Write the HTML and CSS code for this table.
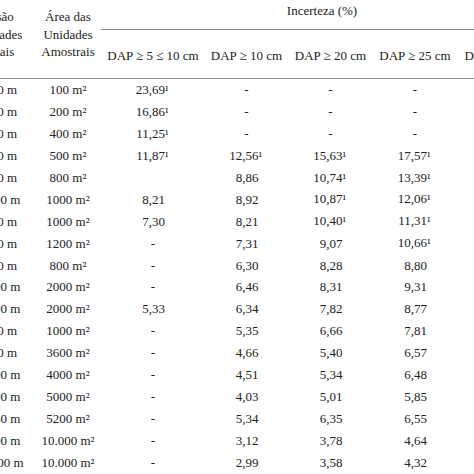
FILE: index.html
```html
<!DOCTYPE html>
<html lang="pt">
<head>
<meta charset="utf-8">
<title>Incerteza</title>
<link rel="stylesheet" href="styles.css">
</head>
<body>
<div class="frame">
<table class="tbl">
<colgroup>
<col class="c1"><col class="c2"><col class="c3"><col class="c4"><col class="c5"><col class="c6"><col class="c7">
</colgroup>
<thead>
<tr>
<th rowspan="2" class="side">Dimensão<br>das Unidades<br>Amostrais</th>
<th rowspan="2" class="side">Área das<br>Unidades<br>Amostrais</th>
<th colspan="5" class="group">Incerteza (%)</th>
</tr>
<tr class="dap">
<th>DAP ≥ 5 ≤ 10 cm</th>
<th>DAP ≥ 10 cm</th>
<th>DAP ≥ 20 cm</th>
<th>DAP ≥ 25 cm</th>
<th>DAP ≥ 30 cm</th>
</tr>
</thead>
<tbody>
<tr><td class="dim">10 x 10 m</td><td>100 m²</td><td class="n"><span class="v">23,69</span><span class="s">¹</span></td><td>-</td><td>-</td><td>-</td><td>-</td></tr>
<tr><td class="dim">10 x 20 m</td><td>200 m²</td><td class="n"><span class="v">16,86</span><span class="s">¹</span></td><td>-</td><td>-</td><td>-</td><td>-</td></tr>
<tr><td class="dim">20 x 20 m</td><td>400 m²</td><td class="n"><span class="v">11,25</span><span class="s">¹</span></td><td>-</td><td>-</td><td>-</td><td>-</td></tr>
<tr><td class="dim">10 x 50 m</td><td>500 m²</td><td class="n"><span class="v">11,87</span><span class="s">¹</span></td><td class="n"><span class="v">12,56</span><span class="s">¹</span></td><td class="n"><span class="v">15,63</span><span class="s">¹</span></td><td class="n"><span class="v">17,57</span><span class="s">¹</span></td><td class="n"><span class="v">19,02</span><span class="s">¹</span></td></tr>
<tr><td class="dim">20 x 40 m</td><td>800 m²</td><td></td><td class="n"><span class="v">8,86</span></td><td class="n"><span class="v">10,74</span><span class="s">¹</span></td><td class="n"><span class="v">13,39</span><span class="s">¹</span></td><td class="n"><span class="v">14,20</span><span class="s">¹</span></td></tr>
<tr><td class="dim">10 x 100 m</td><td>1000 m²</td><td class="n"><span class="v">8,21</span></td><td class="n"><span class="v">8,92</span></td><td class="n"><span class="v">10,87</span><span class="s">¹</span></td><td class="n"><span class="v">12,06</span><span class="s">¹</span></td><td class="n"><span class="v">13,10</span><span class="s">¹</span></td></tr>
<tr><td class="dim">20 x 50 m</td><td>1000 m²</td><td class="n"><span class="v">7,30</span></td><td class="n"><span class="v">8,21</span></td><td class="n"><span class="v">10,40</span><span class="s">¹</span></td><td class="n"><span class="v">11,31</span><span class="s">¹</span></td><td class="n"><span class="v">12,44</span><span class="s">¹</span></td></tr>
<tr><td class="dim">30 x 40 m</td><td>1200 m²</td><td>-</td><td class="n"><span class="v">7,31</span></td><td class="n"><span class="v">9,07</span></td><td class="n"><span class="v">10,66</span><span class="s">¹</span></td><td class="n"><span class="v">11,02</span></td></tr>
<tr><td class="dim">20 x 40 m</td><td>800 m²</td><td>-</td><td class="n"><span class="v">6,30</span></td><td class="n"><span class="v">8,28</span></td><td class="n"><span class="v">8,80</span></td><td class="n"><span class="v">9,95</span></td></tr>
<tr><td class="dim">20 x 100 m</td><td>2000 m²</td><td>-</td><td class="n"><span class="v">6,46</span></td><td class="n"><span class="v">8,31</span></td><td class="n"><span class="v">9,31</span></td><td class="n"><span class="v">10,12</span></td></tr>
<tr><td class="dim">10 x 200 m</td><td>2000 m²</td><td class="n"><span class="v">5,33</span></td><td class="n"><span class="v">6,34</span></td><td class="n"><span class="v">7,82</span></td><td class="n"><span class="v">8,77</span></td><td class="n"><span class="v">9,60</span></td></tr>
<tr><td class="dim">25 x 40 m</td><td>1000 m²</td><td>-</td><td class="n"><span class="v">5,35</span></td><td class="n"><span class="v">6,66</span></td><td class="n"><span class="v">7,81</span></td><td class="n"><span class="v">8,43</span></td></tr>
<tr><td class="dim">60 x 60 m</td><td>3600 m²</td><td>-</td><td class="n"><span class="v">4,66</span></td><td class="n"><span class="v">5,40</span></td><td class="n"><span class="v">6,57</span></td><td class="n"><span class="v">7,20</span></td></tr>
<tr><td class="dim">40 x 100 m</td><td>4000 m²</td><td>-</td><td class="n"><span class="v">4,51</span></td><td class="n"><span class="v">5,34</span></td><td class="n"><span class="v">6,48</span></td><td class="n"><span class="v">7,05</span></td></tr>
<tr><td class="dim">50 x 100 m</td><td>5000 m²</td><td>-</td><td class="n"><span class="v">4,03</span></td><td class="n"><span class="v">5,01</span></td><td class="n"><span class="v">5,85</span></td><td class="n"><span class="v">6,41</span></td></tr>
<tr><td class="dim">40 x 130 m</td><td>5200 m²</td><td>-</td><td class="n"><span class="v">5,34</span></td><td class="n"><span class="v">6,35</span></td><td class="n"><span class="v">6,55</span></td><td class="n"><span class="v">7,12</span></td></tr>
<tr><td class="dim">50 x 200 m</td><td>10.000 m²</td><td>-</td><td class="n"><span class="v">3,12</span></td><td class="n"><span class="v">3,78</span></td><td class="n"><span class="v">4,64</span></td><td class="n"><span class="v">5,08</span></td></tr>
<tr><td class="dim">100 x 100 m</td><td>10.000 m²</td><td>-</td><td class="n"><span class="v">2,99</span></td><td class="n"><span class="v">3,58</span></td><td class="n"><span class="v">4,32</span></td><td class="n"><span class="v">4,97</span></td></tr>
</tbody>
</table>
</div>
</body>
</html>
```
FILE: styles.css
```css
html, body {
  margin: 0;
  padding: 0;
  background: #ffffff;
  overflow: hidden;
}

.frame {
  width: 474px;
  height: 474px;
  overflow: hidden;
}

.tbl {
  table-layout: fixed;
  width: 603px;
  margin: -7.5px 0 0 -60px;
  border-collapse: collapse;
  border-spacing: 0;
  font-family: "Liberation Serif", "Times New Roman", serif;
  font-size: 13px;
  color: #222222;
}

.c1 { width: 95px; }
.c2 { width: 66px; }
.c3 { width: 104px; }
.c4 { width: 83px; }
.c5 { width: 85px; }
.c6 { width: 84px; }
.c7 { width: 86px; }

.tbl th {
  font-weight: normal;
  text-align: center;
  line-height: 17.5px;
  padding: 0;
  white-space: nowrap;
}

.tbl th.side {
  vertical-align: middle;
  padding-bottom: 2px;
  border-bottom: 1px solid #8c8c8c;
}

.tbl th.group {
  padding: 9.75px 0 9.25px;
  border-bottom: 1px solid #8c8c8c;
}

.tbl tr.dap th {
  padding: 16.5px 0 14px;
  border-bottom: 1px solid #8c8c8c;
}

.tbl td {
  height: 21.9px;
  padding: 0;
  line-height: 15px;
  text-align: center;
  vertical-align: middle;
  white-space: nowrap;
}

.tbl td.dim {
  padding-left: 7px;
}

.tbl td.n {
  padding-right: 6px;
}

.v {
  display: inline-block;
  width: 30px;
  text-align: right;
}

.s {
  display: inline-block;
  width: 0;
  font-size: 12px;
}
```
